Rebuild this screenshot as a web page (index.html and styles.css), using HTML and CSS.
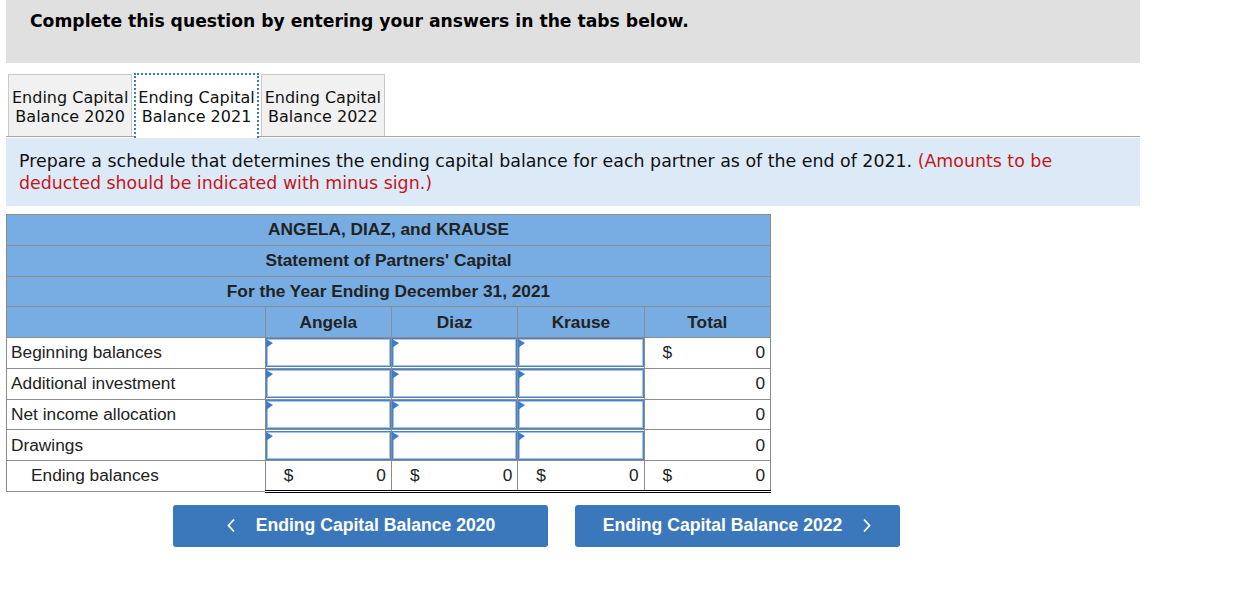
FILE: index.html
```html
<!DOCTYPE html>
<html>
<head>
<meta charset="utf-8">
<link rel="stylesheet" href="styles.css">
</head>
<body>
<div class="page">
  <div class="banner">Complete this question by entering your answers in the tabs below.</div>
  <div class="tabs">
    <div class="tab">Ending Capital<br>Balance 2020</div>
    <div class="tab active">Ending Capital<br>Balance 2021</div>
    <div class="tab">Ending Capital<br>Balance 2022</div>
  </div>
  <div class="instr">Prepare a schedule that determines the ending capital balance for each partner as of the end of 2021. <span class="red">(Amounts to be deducted should be indicated with minus sign.)</span></div>
  <table class="sched">
    <colgroup>
      <col class="c-label"><col class="c-amt"><col class="c-amt"><col class="c-amt"><col class="c-amt">
    </colgroup>
    <tr class="hd"><th colspan="5">ANGELA, DIAZ, and KRAUSE</th></tr>
    <tr class="hd"><th colspan="5">Statement of Partners' Capital</th></tr>
    <tr class="hd"><th colspan="5">For the Year Ending December 31, 2021</th></tr>
    <tr class="hd"><th></th><th>Angela</th><th>Diaz</th><th>Krause</th><th>Total</th></tr>
    <tr>
      <td class="lbl">Beginning balances</td>
      <td class="inp"><div class="box"></div></td>
      <td class="inp"><div class="box"></div></td>
      <td class="inp"><div class="box"></div></td>
      <td><div class="amt"><span>$</span><span>0</span></div></td>
    </tr>
    <tr>
      <td class="lbl">Additional investment</td>
      <td class="inp"><div class="box"></div></td>
      <td class="inp"><div class="box"></div></td>
      <td class="inp"><div class="box"></div></td>
      <td><div class="amt"><span></span><span>0</span></div></td>
    </tr>
    <tr>
      <td class="lbl">Net income allocation</td>
      <td class="inp"><div class="box"></div></td>
      <td class="inp"><div class="box"></div></td>
      <td class="inp"><div class="box"></div></td>
      <td><div class="amt"><span></span><span>0</span></div></td>
    </tr>
    <tr>
      <td class="lbl">Drawings</td>
      <td class="inp"><div class="box"></div></td>
      <td class="inp"><div class="box"></div></td>
      <td class="inp"><div class="box"></div></td>
      <td><div class="amt"><span></span><span>0</span></div></td>
    </tr>
    <tr class="total">
      <td class="lbl indent">Ending balances</td>
      <td class="sum"><div class="amt"><span>$</span><span>0</span></div></td>
      <td class="sum"><div class="amt"><span>$</span><span>0</span></div></td>
      <td class="sum"><div class="amt"><span>$</span><span>0</span></div></td>
      <td class="sum"><div class="amt"><span>$</span><span>0</span></div></td>
    </tr>
  </table>
  <div class="nav">
    <div class="btn prev">
      <svg class="chev" width="10" height="15" viewBox="0 0 10 15"><polyline points="8,1.5 2.5,7.5 8,13.5" fill="none" stroke="#fff" stroke-width="1.8"/></svg>
      <span>Ending Capital Balance 2020</span>
    </div>
    <div class="btn next">
      <span>Ending Capital Balance 2022</span>
      <svg class="chev" width="10" height="15" viewBox="0 0 10 15"><polyline points="2,1.5 7.5,7.5 2,13.5" fill="none" stroke="#fff" stroke-width="1.8"/></svg>
    </div>
  </div>
</div>
</body>
</html>
```
FILE: styles.css
```css
html, body {
  margin: 0;
  padding: 0;
  background: #fff;
}
.page {
  padding-left: 6px;
  width: 1134px;
  font-family: "DejaVu Sans", Verdana, sans-serif;
  color: #000;
}
.banner {
  background: #e0e0e0;
  height: 63px;
  box-sizing: border-box;
  padding: 10px 24px 0;
  font-weight: bold;
  font-size: 17.2px;
  line-height: 22px;
  color: #000;
}
.tabs {
  display: flex;
  gap: 2px;
  margin-top: 11px;
  padding-left: 2px;
  border-bottom: 1px solid #a6a6a6;
  height: 62px;
}
.tab {
  box-sizing: border-box;
  height: 62px;
  border: 1px solid #c8c8c8;
  border-bottom: none;
  background: #f1f1f1;
  font-size: 16px;
  line-height: 19px;
  text-align: center;
  padding: 13px 3px 0;
  color: #111;
  white-space: nowrap;
}
.tab.active {
  background: #fff;
  border: 2px dotted #3a78c2;
  border-bottom: none;
  height: 65px;
  margin-top: -1px;
  padding: 13px 2px 0;
  position: relative;
  z-index: 1;
}
.instr {
  margin-top: 1px;
  background: #dceaf8;
  padding: 12px 60px 12px 13px;
  font-size: 17.4px;
  line-height: 22px;
  color: #111;
}
.red {
  color: #c4161c;
}
.sched {
  margin-top: 8px;
  border-collapse: collapse;
  table-layout: fixed;
  width: 765px;
  font-family: "Liberation Sans", Arial, sans-serif;
  font-size: 17.3px;
  color: #222;
  border: 1px solid #808080;
}
.c-label { width: 258px; }
.c-amt { width: 126px; }
.sched th, .sched td {
  border: 1px solid #8c8c8c;
  padding: 0;
  height: 30.75px;
  box-sizing: border-box;
}
.hd th {
  background: #78ade3;
  font-weight: bold;
  text-align: center;
  color: #222;
}
.lbl {
  padding-left: 4px !important;
  text-align: left;
}
.lbl.indent {
  padding-left: 24px !important;
}
.inp {
  position: relative;
}
.box {
  margin: 0;
  height: 29px;
  box-sizing: border-box;
  border: 1px solid #4a82c7;
  box-shadow: inset 0 0 0 1px #a3c3ea;
  background: #fff;
  position: relative;
}
.box::before {
  content: "";
  position: absolute;
  left: -1px;
  top: 0;
  border-left: 7px solid #3d7cc9;
  border-top: 4px solid transparent;
  border-bottom: 5px solid transparent;
}
.amt {
  display: flex;
  justify-content: space-between;
  padding: 0 5px 0 18px;
}
.total td.sum {
  border-top: 1px solid #000;
  border-bottom: 3px double #000;
}
.nav {
  display: flex;
  gap: 27px;
  margin-top: 12px;
  margin-left: 167px;
}
.btn {
  display: flex;
  align-items: center;
  justify-content: center;
  gap: 20px;
  height: 42px;
  background: #3b77bb;
  border-radius: 3px;
  color: #fff;
  font-family: "Liberation Sans", Arial, sans-serif;
  font-weight: bold;
  font-size: 17.6px;
}
.btn.prev { width: 375px; }
.btn.next { width: 325px; }
.chev { display: block; }
```
